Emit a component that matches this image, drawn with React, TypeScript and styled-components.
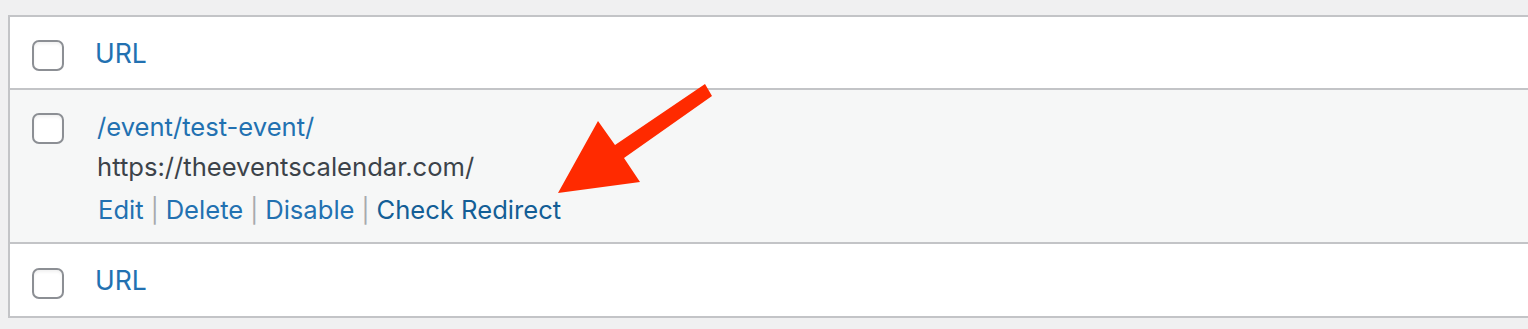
import styled, { createGlobalStyle } from 'styled-components';

const GlobalStyle = createGlobalStyle`
  html, body {
    margin: 0;
    padding: 0;
    background: #f0f0f1;
    overflow: hidden;
  }

  body {
    font-family: Inter, "Noto Sans", Roboto, sans-serif;
    -webkit-font-smoothing: antialiased;
  }
`;

const Page = styled.div`
  position: relative;
  padding: 15px 0 0 8px;
  height: 329px;
  box-sizing: border-box;
`;

const Table = styled.div`
  width: calc(100% + 20px);
  background: #fff;
  border: 2px solid #c3c4c7;
  display: flex;
  flex-direction: column;
`;

const Row = styled.div<{ $alt?: boolean; $height: number }>`
  display: flex;
  align-items: flex-start;
  height: ${({ $height }) => $height}px;
  background: ${({ $alt }) => ($alt ? '#f6f7f7' : '#fff')};
  border-top: ${({ $alt }) => ($alt ? '2px solid #c3c4c7' : 'none')};
  border-bottom: ${({ $alt }) => ($alt ? '2px solid #c3c4c7' : 'none')};
`;

const CheckCell = styled.div<{ $top: number }>`
  width: 85px;
  padding: ${({ $top }) => $top}px 0 0 22px;
  box-sizing: border-box;
  flex: none;
`;

const Checkbox = styled.span`
  display: block;
  width: 32px;
  height: 31px;
  box-sizing: border-box;
  border: 2px solid #8c8f94;
  border-radius: 7px;
  background: #fff;
  box-shadow: inset 0 2px 3px rgba(0, 0, 0, 0.06);
`;

const HeadLink = styled.a<{ $top: number }>`
  margin-top: ${({ $top }) => $top}px;
  font-size: 26.5px;
  line-height: 34px;
  color: #2271b1;
  text-decoration: none;
`;

const Cell = styled.div`
  display: flex;
  flex-direction: column;
  padding: 18px 0 0 2px;
  font-size: 25.6px;
`;

const SourceLink = styled.a`
  line-height: 38px;
  color: #2271b1;
  text-decoration: none;
`;

const Target = styled.div`
  line-height: 42px;
  color: #3c434a;
`;

const Actions = styled.div`
  line-height: 44px;
  margin-left: 1px;
  white-space: nowrap;
`;

const Action = styled.a<{ $dark?: boolean }>`
  color: ${({ $dark }) => ($dark ? '#135e96' : '#2271b1')};
  text-decoration: none;
`;

const Sep = styled.span`
  color: #a7aaad;
  font-size: 24px;
  margin: 0 7px;
`;

const Arrow = styled.svg`
  position: absolute;
  left: 0;
  top: 0;
  pointer-events: none;
`;

const actions = ['Edit', 'Delete', 'Disable', 'Check Redirect'];

export default function App() {
  return (
    <Page>
      <GlobalStyle />
      <Table>
        <Row $height={71}>
          <CheckCell $top={23}>
            <Checkbox />
          </CheckCell>
          <HeadLink href="#" $top={19}>URL</HeadLink>
        </Row>
        <Row $alt $height={152}>
          <CheckCell $top={23}>
            <Checkbox />
          </CheckCell>
          <Cell>
            <SourceLink href="#">/event/test-event/</SourceLink>
            <Target>https://theeventscalendar.com/</Target>
            <Actions>
              {actions.map((label, i) => (
                <span key={label}>
                  {i > 0 && <Sep>|</Sep>}
                  <Action href="#" $dark={label === 'Check Redirect'}>
                    {label}
                  </Action>
                </span>
              ))}
            </Actions>
          </Cell>
        </Row>
        <Row $height={72}>
          <CheckCell $top={24}>
            <Checkbox />
          </CheckCell>
          <HeadLink href="#" $top={19}>URL</HeadLink>
        </Row>
      </Table>
      <Arrow width="1528" height="329" viewBox="0 0 1528 329">
        <polygon
          fill="#ff2a00"
          points="705,84 712,96 624,158 640,182 558,193 598,121 615,145"
        />
      </Arrow>
    </Page>
  );
}
